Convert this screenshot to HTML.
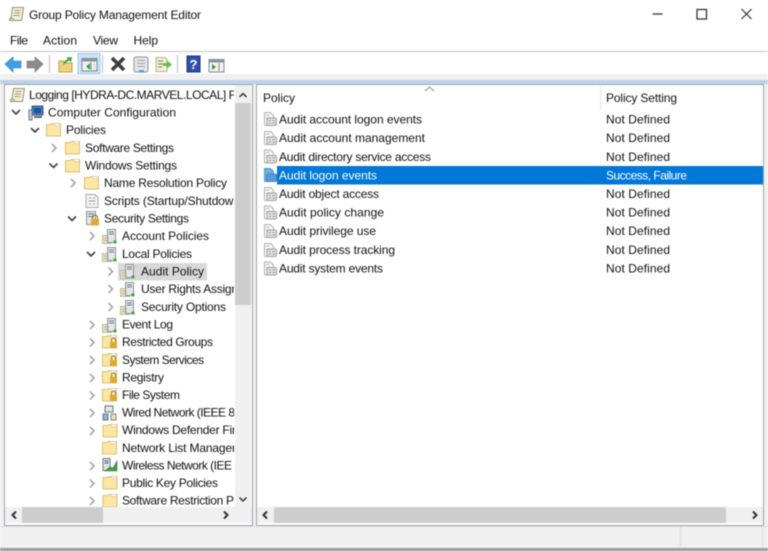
<!DOCTYPE html>
<html><head><meta charset="utf-8"><title>Group Policy Management Editor</title>
<style>
html,body{margin:0;padding:0;background:#fff;width:768px;height:551px;overflow:hidden}
svg{display:block;position:absolute;left:0;top:0;filter:blur(.5px)}
text{font-family:"Liberation Sans",sans-serif;font-size:12px;fill:#111}
.ch{fill:none;stroke:#a6a6a6;stroke-width:1.6}
.cd{fill:none;stroke:#404040;stroke-width:1.6}
.sb{fill:none;stroke:#333;stroke-width:2}
</style></head><body>
<svg width="768" height="551" viewBox="0 0 768 551" xmlns="http://www.w3.org/2000/svg">
<defs>
<clipPath id="tc"><rect x="5" y="86" width="229" height="421"/></clipPath>
<g id="folder"><path d="M.5 2.500h5l1-1h8v12.500h-14z" fill="#fbe6a2" stroke="#dcc07a"/><rect x="9" y="1.500" width="5" height="2" fill="#fff" stroke="#c9c0a0" stroke-width=".5"/></g>
<g id="lockf"><use href="#folder"/><rect x="8" y="8" width="7" height="6" fill="#e0a92c"/><path d="M9.500 8V6a2 2 0 0 1 4 0v2" fill="none" stroke="#8a7a50"/></g>
<g id="srv"><path d="M0.500 7.500h9v8h-9z" fill="#ece3c6" stroke="#c0b89c"/><path d="M5.500 1.500h8v13h-8z" fill="#e4e7ea" stroke="#8b949b"/><path d="M7 4h5M7 6h5" stroke="#6f7a84"/><path d="M2 10h5M2 12.500h5" stroke="#b5ad90"/><rect x="11.500" y="12.500" width="3" height="3" fill="#35b035"/></g>
<g id="pol"><path d="M1.500 1.500h6l3 3v10h-9z" fill="#f5f5f5" stroke="#b4b4b4"/><path d="M3 4h3M3 7h5" stroke="#bbb"/><rect x="4" y="7" width="9.500" height="7.500" rx="1.500" fill="#e2e2e2" stroke="#a0a0a0"/><path d="M6 9.500h2M9.500 9.500h2.500M6 12h2M9.500 12h2.500" stroke="#999"/></g>
<g id="scroll"><path d="M4.500 1.500h11l-2 13H1.500l1.500-2z" fill="#f6efd3" stroke="#97917a"/><path d="M6.500 4.500h6M6 7h6M5.500 9.500h6" stroke="#a09a80"/><path d="M1 13c2-1.500 4-1 5 1" fill="#e9e1b8" stroke="#97917a"/></g>
</defs>

<!-- chrome -->
<rect width="768" height="551" fill="#fff"/>
<rect y="51" width="768" height="1" fill="#c4c4c4"/>
<rect y="74" width="768" height="478" fill="#f0f0f0"/>
<rect y="80" width="768" height="4" fill="#bed3e7"/>
<rect y="548" width="768" height="3" fill="#9c9c9c"/>

<!-- title -->
<use href="#scroll" x="8" y="6"/>
<text x="29" y="19" textLength="172">Group Policy Management Editor</text>
<path d="M652.500 14h10" stroke="#333" stroke-width="1.300"/>
<rect x="697" y="9.500" width="9.500" height="9.500" fill="none" stroke="#333" stroke-width="1.300"/>
<path d="M741.500 9l10 10M751.500 9l-10 10" stroke="#333" stroke-width="1.200"/>

<!-- menu -->
<text x="10" y="44.500" textLength="18">File</text>
<text x="43" y="44.500" textLength="34">Action</text>
<text x="93" y="44.500" textLength="25">View</text>
<text x="133.500" y="44.500" textLength="24.500">Help</text>

<!-- toolbar -->
<path d="M5 64l8-7v4h8v7h-8v4z" fill="#3f9fe4" stroke="#2a7ebd" stroke-width=".6"/>
<path d="M43 64l-8-7v4h-8v7h8v4z" fill="#8b8b8b" stroke="#777" stroke-width=".6"/>
<rect x="49" y="55" width="1" height="18" fill="#bdbdbd"/>
<path d="M59 61h4l2 2h7v9H59z" fill="#f2d27e" stroke="#c49f4a"/>
<path d="M63 66c0-4 2-6 5-7l-2-1.500 6-.5-1 5.500-1.500-2c-2 .8-5 2.500-6.500 5.500z" fill="#44a344"/>
<rect x="78" y="53.500" width="22" height="20" fill="#cce4f7" stroke="#9fcdf0"/>
<rect x="82" y="58.500" width="15" height="12.500" fill="#f2f2f2" stroke="#808a90"/>
<rect x="82" y="58.500" width="15" height="3" fill="#8a949b"/>
<path d="M91 62v8" stroke="#808a90"/><path d="M93 63h3v7h-3z" fill="#dfe5ea"/>
<path d="M90 63l-4 3.500 4 3.500z" fill="#2f9e44"/>
<rect x="102" y="55" width="1" height="18" fill="#bdbdbd"/>
<path d="M112 58l12 12M124 58l-12 12" stroke="#3d3d3d" stroke-width="3.600"/>
<rect x="134" y="57" width="14" height="15" rx="2" fill="#e6e6e6" stroke="#8f9499"/>
<path d="M137 60.500h8M137 63.500h8M137 66.500h8" stroke="#9aa3aa"/>
<rect x="139" y="70" width="5" height="2.500" fill="#41a5e6"/>
<path d="M156 57.500h9l2 2v12h-11z" fill="#f6f0d2" stroke="#b7ad85"/>
<path d="M158 61h5M158 64h5M158 67h4" stroke="#777"/>
<path d="M163 63h4v-2.500l5 4-5 4V66h-4z" fill="#5cc04a"/>
<rect x="177" y="55" width="1" height="18" fill="#bdbdbd"/>
<rect x="187" y="56" width="13" height="16" fill="#2f4fb0" stroke="#1f3478"/>
<text x="189.500" y="69" style="font-size:13px;font-weight:bold;fill:#fff">?</text>
<rect x="209" y="59.500" width="15" height="12.500" fill="#f2f2f2" stroke="#808a90"/>
<rect x="209" y="59.500" width="15" height="3" fill="#8a949b"/>
<path d="M219 63v8" stroke="#808a90"/><path d="M212 64l4 3-4 3z" fill="#2f9e44"/>

<!-- tree pane -->
<rect x="4.500" y="84.500" width="248" height="441" fill="#fff" stroke="#a0a5aa"/>
<rect x="235" y="85" width="16" height="422" fill="#f0f0f0"/>
<rect x="235" y="103" width="16" height="202" fill="#cdcdcd"/>
<path class="sb" style="stroke-width:1.500" d="M239.500 97l3.500-3.500 3.500 3.500M239.500 497.500l3.500 3.500 3.500-3.500"/>
<rect x="5" y="507" width="247" height="16" fill="#f0f0f0"/>
<rect x="22" y="507" width="81" height="16" fill="#cdcdcd"/>
<path class="sb" d="M16 511.500l-3.500 3.500 3.500 3.500M224 511.500l3.500 3.500-3.500 3.500"/>
<rect x="118" y="263" width="89" height="17.500" fill="#d9d9d9"/>

<g clip-path="url(#tc)">
<use href="#scroll" x="9" y="87"/>
<text x="29" y="99" textLength="207">Logging [HYDRA-DC.MARVEL.LOCAL] F</text>

<path class="cd" d="M12 110l4 4 4-4"/>
<g transform="translate(28,105)"><rect x="4" y="1" width="11" height="9" fill="#3e7fd0" stroke="#555"/><rect x="6" y="3" width="7" height="5" fill="#1b4fa8"/><path d="M1 5h3v10H1z" fill="#cfd4da" stroke="#6a7580"/><path d="M6 12h8" stroke="#5b6570" stroke-width="2"/></g>
<text x="48" y="116.500" textLength="128">Computer Configuration</text>

<path class="cd" d="M31 128l4 4 4-4"/>
<use href="#folder" x="46" y="122"/>
<text x="66" y="134" textLength="40">Policies</text>

<path class="ch" d="M52 144l4 4-4 4"/>
<use href="#folder" x="65" y="140"/>
<text x="85" y="152" textLength="89">Software Settings</text>

<path class="cd" d="M49.500 163.500l4 4 4-4"/>
<use href="#folder" x="65" y="158"/>
<text x="85" y="169.500" textLength="92">Windows Settings</text>

<path class="ch" d="M71 179l4 4-4 4"/>
<use href="#folder" x="84" y="175"/>
<text x="104" y="187" textLength="123">Name Resolution Policy</text>

<g transform="translate(84,193)"><path d="M2 1.500h9l3 3v10H2z" fill="#f4f4f4" stroke="#a8a8a8"/><path d="M5 5h2M9 5h2M4.500 8h7M5 11h2M9 11h2" stroke="#9a9a9a"/></g>
<text x="104" y="205" textLength="136">Scripts (Startup/Shutdown</text>

<path class="cd" d="M68 216.500l4 4 4-4"/>
<g transform="translate(84,210)"><path d="M2.500 1.500h9v13h-9z" fill="#e4e7ea" stroke="#8b949b"/><path d="M4 4h6M4 6.500h6" stroke="#6f7a84"/><rect x="7" y="9" width="8" height="6.500" fill="#e0a92c"/><path d="M8.500 9V7.500a2.500 2.500 0 0 1 5 0V9" fill="none" stroke="#7a6a40"/></g>
<text x="104" y="222.500" textLength="85">Security Settings</text>

<path class="ch" d="M90 232l4 4-4 4"/>
<use href="#srv" x="102" y="228"/>
<text x="122" y="240" textLength="87">Account Policies</text>

<path class="cd" d="M87 252l4 4 4-4"/>
<use href="#srv" x="102" y="246"/>
<text x="122" y="258" textLength="70">Local Policies</text>

<path class="ch" d="M108.500 267.500l4 4-4 4"/>
<use href="#srv" x="120" y="263"/>
<text x="141" y="275.500" textLength="63">Audit Policy</text>

<path class="ch" d="M108.500 285l4 4-4 4"/>
<use href="#srv" x="120" y="281"/>
<text x="141" y="293" textLength="97">User Rights Assign</text>

<path class="ch" d="M108.500 303l4 4-4 4"/>
<use href="#srv" x="120" y="299"/>
<text x="141" y="311" textLength="85">Security Options</text>

<path class="ch" d="M90 321l4 4-4 4"/>
<use href="#srv" x="102" y="317"/>
<text x="122" y="328.500" textLength="51">Event Log</text>

<path class="ch" d="M90 338.500l4 4-4 4"/>
<use href="#lockf" x="102" y="334"/>
<text x="122" y="346" textLength="91">Restricted Groups</text>

<path class="ch" d="M90 356l4 4-4 4"/>
<use href="#lockf" x="102" y="352"/>
<text x="122" y="364" textLength="82">System Services</text>

<path class="ch" d="M90 374l4 4-4 4"/>
<use href="#lockf" x="102" y="369"/>
<text x="122" y="381.500" textLength="42">Registry</text>

<path class="ch" d="M90 391.500l4 4-4 4"/>
<use href="#lockf" x="102" y="387"/>
<text x="122" y="399" textLength="58">File System</text>

<path class="ch" d="M90 409l4 4-4 4"/>
<g transform="translate(102,405)"><path d="M3 1h8v6H3z" fill="#e6e6e6" stroke="#6a7580"/><rect x="1" y="9" width="5" height="6" fill="#8fb6d9" stroke="#6a7580"/><rect x="9" y="9" width="5" height="6" fill="#e9dfc0" stroke="#8a8a70"/></g>
<text x="122" y="416.500" textLength="113">Wired Network (IEEE 8</text>

<path class="ch" d="M90 427l4 4-4 4"/>
<use href="#folder" x="102.500" y="423"/>
<text x="122" y="434" textLength="140">Windows Defender Firewall</text>

<use href="#folder" x="102" y="440"/>
<text x="122" y="452" textLength="114">Network List Manager</text>

<path class="ch" d="M90 462l4 4-4 4"/>
<g transform="translate(102,457)"><path d="M1 1.500h7v12H1z" fill="#dfe3e6" stroke="#707a82"/><path d="M2.500 4h4M2.500 6h4" stroke="#556"/><path d="M3 14l5-4 3 1 4-7v10z" fill="#3fa33f" stroke="#2f7f2f" stroke-width=".6"/></g>
<text x="122" y="469.500" textLength="110">Wireless Network (IEE</text>

<path class="ch" d="M90 479.500l4 4-4 4"/>
<use href="#folder" x="102.500" y="475"/>
<text x="122" y="487" textLength="96">Public Key Policies</text>

<path class="ch" d="M90 497l4 4-4 4"/>
<use href="#folder" x="102.500" y="493"/>
<text x="122" y="504.500" textLength="112">Software Restriction P</text>
</g>

<!-- list pane -->
<rect x="256.500" y="84.500" width="507" height="441" fill="#fff" stroke="#a0a5aa"/>
<path d="M425 91l4.500-4 4.500 4" fill="none" stroke="#9c9c9c" stroke-width="1.200"/>
<rect x="600" y="86" width="1" height="24" fill="#e6e6e6"/>
<text x="263" y="102" textLength="32">Policy</text>
<text x="606" y="102" textLength="71">Policy Setting</text>

<rect x="277" y="166" width="486" height="18.500" fill="#0078d7"/>

<use href="#pol" x="263" y="111"/>
<text x="279" y="123.500" textLength="143">Audit account logon events</text>
<text x="606" y="123.500" textLength="64">Not Defined</text>

<use href="#pol" x="263" y="130"/>
<text x="279" y="142" textLength="146">Audit account management</text>
<text x="606" y="142" textLength="64">Not Defined</text>

<use href="#pol" x="263" y="148.500"/>
<text x="279" y="161" textLength="152">Audit directory service access</text>
<text x="606" y="161" textLength="64">Not Defined</text>

<g transform="translate(263,167)"><path d="M1.500 1.500h6l3 3v10h-9z" fill="#6fb0e4" stroke="#4f94cc"/><rect x="4" y="7" width="9.500" height="7.500" rx="1.500" fill="#5aa2de" stroke="#3f84c0"/><path d="M6 9.500h2M9.500 9.500h2.500M6 12h2M9.500 12h2.500" stroke="#3f84c0"/></g>
<text x="279" y="179.500" textLength="98" style="fill:#fff">Audit logon events</text>
<text x="606" y="179.500" textLength="81" style="fill:#fff">Success, Failure</text>

<use href="#pol" x="263" y="186"/>
<text x="279" y="198" textLength="100">Audit object access</text>
<text x="606" y="198" textLength="64">Not Defined</text>

<use href="#pol" x="263" y="204.500"/>
<text x="279" y="216.500" textLength="105">Audit policy change</text>
<text x="606" y="216.500" textLength="64">Not Defined</text>

<use href="#pol" x="263" y="223"/>
<text x="279" y="235" textLength="97">Audit privilege use</text>
<text x="606" y="235" textLength="64">Not Defined</text>

<use href="#pol" x="263" y="242"/>
<text x="279" y="254" textLength="116">Audit process tracking</text>
<text x="606" y="254" textLength="64">Not Defined</text>

<use href="#pol" x="263" y="260.500"/>
<text x="279" y="272.500" textLength="104">Audit system events</text>
<text x="606" y="272.500" textLength="64">Not Defined</text>

<rect x="257" y="507" width="506" height="16" fill="#f0f0f0"/>
<rect x="274" y="507" width="452" height="16" fill="#cdcdcd"/>
<path class="sb" d="M267 511.500l-3.500 3.500 3.500 3.500M753 511.500l3.500 3.500-3.500 3.500"/>

<!-- status -->
<rect x="0" y="526" width="768" height="1" fill="#dcdcdc"/>
<rect x="680" y="527" width="1" height="20" fill="#dcdcdc"/>
<rect x="762" y="527" width="1" height="20" fill="#dcdcdc"/>
</svg>
</body></html>
